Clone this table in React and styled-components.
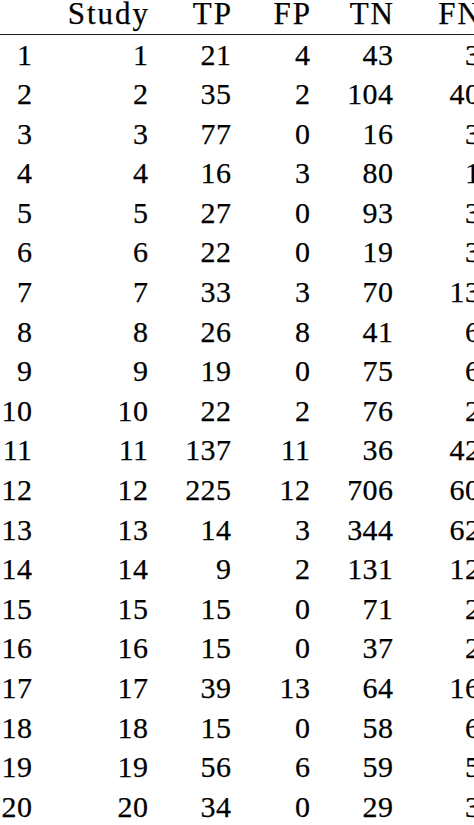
import styled, { createGlobalStyle } from 'styled-components';

const GlobalStyle = createGlobalStyle`
  html, body {
    margin: 0;
    padding: 0;
    background: #fff;
    overflow: hidden;
  }
  body {
    font-family: "Liberation Serif", "DejaVu Serif", serif;
    color: #000;
  }
`;

const Table = styled.div`
  width: 480px;
  display: flex;
  flex-direction: column;
`;

const Row = styled.div`
  display: grid;
  grid-template-columns: 32px 116px 83px 79px 83px 87px;
  height: ${({ $head }) => ($head ? '33.5px' : '39.6px')};
  line-height: ${({ $head }) => ($head ? '28px' : '39.6px')};
  border-bottom: ${({ $head }) => ($head ? '1.8px solid #1a1a1a' : 'none')};
`;

const Cell = styled.div`
  text-align: right;
  white-space: nowrap;
  font-size: ${({ $head }) => ($head ? '31px' : '30px')};
  -webkit-text-stroke: 0.25px #000;
  letter-spacing: ${({ $head }) => ($head ? '2px' : '0.4px')};
  margin-right: ${({ $head }) => ($head ? '-2px' : '-0.4px')};
`;

const columns = ['', 'Study', 'TP', 'FP', 'TN', 'FN'];

const data = [
  [21, 4, 43, 3],
  [35, 2, 104, 40],
  [77, 0, 16, 3],
  [16, 3, 80, 1],
  [27, 0, 93, 3],
  [22, 0, 19, 3],
  [33, 3, 70, 13],
  [26, 8, 41, 6],
  [19, 0, 75, 6],
  [22, 2, 76, 2],
  [137, 11, 36, 42],
  [225, 12, 706, 60],
  [14, 3, 344, 62],
  [9, 2, 131, 12],
  [15, 0, 71, 2],
  [15, 0, 37, 2],
  [39, 13, 64, 16],
  [15, 0, 58, 6],
  [56, 6, 59, 5],
  [34, 0, 29, 3],
];

export default function App() {
  return (
    <>
      <GlobalStyle />
      <Table>
        <Row $head>
          {columns.map((c, i) => (
            <Cell key={i} $head>
              {c}
            </Cell>
          ))}
        </Row>
        {data.map((r, i) => (
          <Row key={i}>
            <Cell>{i + 1}</Cell>
            <Cell>{i + 1}</Cell>
            {r.map((v, j) => (
              <Cell key={j}>{v}</Cell>
            ))}
          </Row>
        ))}
      </Table>
    </>
  );
}
